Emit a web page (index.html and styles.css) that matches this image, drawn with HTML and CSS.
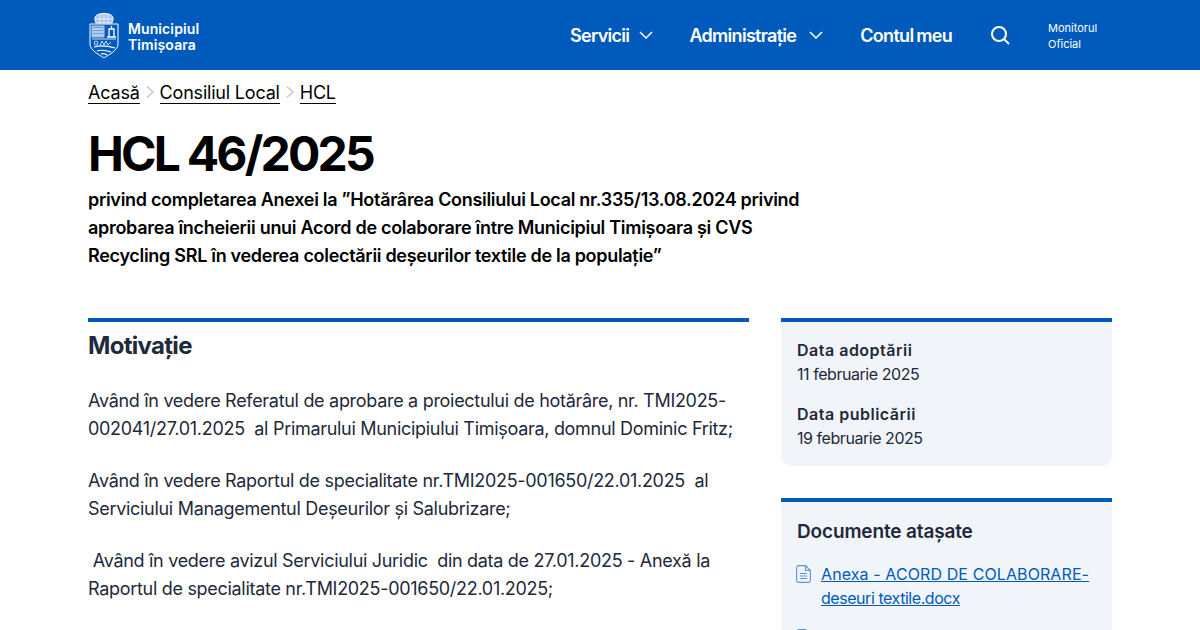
FILE: index.html
```html
<!DOCTYPE html>
<html lang="ro">
<head>
    <meta charset="UTF-8">
    <meta name="viewport" content="width=device-width, initial-scale=1.0">
    <title>HCL 46/2025</title>
    <link rel="stylesheet" href="styles.css">
</head>
<body>
    <header class="site-header">
        <div class="header-inner">
            <a class="logo" href="#">
                <svg class="logo-crest" width="30" height="46" viewBox="0 0 30 46" fill="none" stroke="#fff">
                    <path d="M7 11 C5 7 6 4 8 3 C11 1 19 1 22 3 C24 4 25 7 23 11 Z" fill="#a9c4e8" stroke-width="1"/>
                    <path d="M7 7 H23 M11 2 V11 M15 1.5 V11 M19 2 V11" stroke-width="0.7"/>
                    <path d="M1 12 H29 V32 C29 38 21 42 15 46 C9 42 1 38 1 32 Z" stroke-width="1"/>
                    <path d="M3 14 H15 V25 H3 Z" stroke-width="0.7" fill="#6f9edb"/>
                    <path d="M4 17 H14 M4 20 H14 M4 23 H14" stroke-width="1"/>
                    <path d="M20 25 V17 H25 V25 M22.5 17 V14 M18 25 H27" stroke-width="1.3"/>
                    <path d="M3 27 H27" stroke-width="0.8"/>
                    <circle cx="7" cy="31" r="1.8" stroke-width="0.8"/>
                    <path d="M11 33 L13 29 L15 33 L17 29 L19 33 L22 30" stroke-width="0.8"/>
                    <path d="M5 35 C11 33 19 34 26 36 M8 39 C13 37 18 39 22 40 M12 42 C14 41 17 42 18 43" stroke-width="1.2"/>
                </svg>
                <span class="logo-text">Municipiul<br>Timișoara</span>
            </a>
            <nav class="main-nav">
                <a class="nav-link nav-servicii" href="#">Servicii
                    <svg class="chevron" width="14" height="8" viewBox="0 0 14 8" fill="none" stroke="#fff" stroke-width="1.5"><path d="M1 1 L7 7 L13 1"/></svg>
                </a>
                <a class="nav-link nav-admin" href="#">Administrație
                    <svg class="chevron" width="14" height="8" viewBox="0 0 14 8" fill="none" stroke="#fff" stroke-width="1.5"><path d="M1 1 L7 7 L13 1"/></svg>
                </a>
                <a class="nav-link nav-cont" href="#">Contul meu</a>
                <a class="nav-search" href="#" aria-label="Caută">
                    <svg width="20" height="20" viewBox="0 0 20 20" fill="none" stroke="#fff" stroke-width="2"><circle cx="9" cy="9" r="7"/><path d="M14 14 L19 19"/></svg>
                </a>
                <a class="nav-monitor" href="#">Monitorul<br>Oficial</a>
            </nav>
        </div>
    </header>

    <main class="page">
        <div class="breadcrumbs">
            <a href="#">Acasă</a>
            <svg width="10" height="14" viewBox="0 0 10 14" fill="none" stroke="#c4c4c4" stroke-width="1.3"><path d="M2 1.5 L8 7 L2 12.5"/></svg>
            <a href="#">Consiliul Local</a>
            <svg width="10" height="14" viewBox="0 0 10 14" fill="none" stroke="#c4c4c4" stroke-width="1.3"><path d="M2 1.5 L8 7 L2 12.5"/></svg>
            <a href="#">HCL</a>
        </div>

        <h1>HCL 46/2025</h1>
        <p class="subtitle">privind completarea Anexei la ”Hotărârea Consiliului Local nr.335/13.08.2024 privind aprobarea încheierii unui Acord de colaborare între Municipiul Timișoara și CVS Recycling SRL în vederea colectării deșeurilor textile de la populație”</p>

        <div class="columns">
            <section class="content">
                <h2>Motivație</h2>
                <p>Având în vedere Referatul de aprobare a proiectului de hotărâre, nr. TMI2025-002041/27.01.2025 &nbsp;al Primarului Municipiului Timișoara, domnul Dominic Fritz;</p>
                <p>Având în vedere Raportul de specialitate nr.TMI2025-001650/22.01.2025 &nbsp;al Serviciului Managementul Deșeurilor și Salubrizare;</p>
                <p>&nbsp;Având în vedere avizul Serviciului Juridic &nbsp;din data de 27.01.2025 - Anexă la Raportul de specialitate nr.TMI2025-001650/22.01.2025;</p>
            </section>

            <aside class="sidebar">
                <div class="card card-dates">
                    <div class="date-item">
                        <strong>Data adoptării</strong>
                        <span>11 februarie 2025</span>
                    </div>
                    <div class="date-item">
                        <strong>Data publicării</strong>
                        <span>19 februarie 2025</span>
                    </div>
                </div>
                <div class="card card-docs">
                    <h3>Documente atașate</h3>
                    <div class="doc">
                        <svg width="15" height="18" viewBox="0 0 15 18" fill="none" stroke="#5b93d8" stroke-width="1.1"><path d="M2.5 .6 H9.5 L14.4 5.5 V15.5 A2 2 0 0 1 12.4 17.4 H2.5 A2 2 0 0 1 .6 15.5 V2.5 A2 2 0 0 1 2.5 .6 Z M9.5 .6 V5.5 H14.4 M4 8.5 H11 M4 11 H11 M4 13.5 H11"/></svg>
                        <a href="#"><span class="doc-head">Anexa - ACORD DE COLABORARE-</span><span class="doc-tail">deseuri textile.docx</span></a>
                    </div>
                    <div class="doc">
                        <svg width="15" height="18" viewBox="0 0 15 18" fill="none" stroke="#5b93d8" stroke-width="1.1"><path d="M2.5 .6 H9.5 L14.4 5.5 V15.5 A2 2 0 0 1 12.4 17.4 H2.5 A2 2 0 0 1 .6 15.5 V2.5 A2 2 0 0 1 2.5 .6 Z M9.5 .6 V5.5 H14.4 M4 8.5 H11 M4 11 H11 M4 13.5 H11"/></svg>
                    </div>
                </div>
            </aside>
        </div>
    </main>
</body>
</html>
```

FILE: styles.css
```css
html, body {
    height: 630px;
    overflow: hidden;
}
body {
    margin: 0;
    font-family: Inter, "Noto Sans", sans-serif;
    color: #1e293b;
    background: #fff;
}
a {
    color: inherit;
}

/* header */
.site-header {
    height: 70px;
    background-color: #005abb;
    color: #fff;
}
.header-inner {
    height: 70px;
    margin: 0 88px;
    display: flex;
    align-items: center;
    justify-content: space-between;
}
.logo {
    display: flex;
    align-items: center;
    gap: 9px;
    margin-left: 1px;
    text-decoration: none;
}
.logo-text {
    padding-top: 3px;
    font-size: 14px;
    line-height: 16px;
    font-weight: 600;
    letter-spacing: 0.1px;
}
.main-nav {
    display: flex;
    align-items: center;
}
.nav-link {
    display: flex;
    align-items: center;
    gap: 10px;
    font-size: 18px;
    font-weight: 600;
    letter-spacing: -0.7px;
    word-spacing: -1px;
    text-decoration: none;
}
.nav-servicii { margin-right: 36px; }
.nav-admin {
    gap: 13px;
    margin-right: 37px;
}
.nav-cont { margin-right: 38px; }
.nav-search {
    display: flex;
    margin-right: 38px;
}
.nav-monitor {
    width: 64px;
    padding-top: 2px;
    font-size: 11px;
    line-height: 16px;
    text-decoration: none;
}

/* breadcrumbs */
.page {
    margin: 0 88px;
}
.breadcrumbs {
    display: flex;
    align-items: center;
    gap: 5px;
    height: 44px;
    font-size: 18px;
    letter-spacing: -0.2px;
    color: #000;
}
.breadcrumbs a {
    padding-top: 2px;
    text-decoration: none;
    border-bottom: 1px solid #000;
    line-height: 20px;
}

/* title */
h1 {
    margin: 13px 0 0;
    font-size: 48px;
    line-height: 54px;
    font-weight: 700;
    letter-spacing: -2.8px;
    color: #000;
}
.subtitle {
    margin: 5px 0 0;
    width: 720px;
    font-size: 18px;
    line-height: 28px;
    font-weight: 600;
    letter-spacing: -0.3px;
    color: #000;
}

/* columns */
.columns {
    display: flex;
    justify-content: space-between;
    margin-top: 48px;
}
.content {
    width: 661px;
    border-top: 4px solid #005abb;
}
h2 {
    margin: 7px 0 0;
    font-size: 24px;
    line-height: 34px;
    font-weight: 700;
    letter-spacing: -0.7px;
}
.content p {
    margin: 24px 0 0;
    font-size: 18px;
    line-height: 28px;
    letter-spacing: -0.3px;
}

/* sidebar */
.sidebar {
    width: 331px;
}
.card {
    background: #f1f5f9;
    border-top: 4px solid #005abb;
    padding: 16px;
}
.card-dates {
    border-radius: 0 0 10px 10px;
    margin-bottom: 32px;
}
.date-item {
    font-size: 16px;
    line-height: 24px;
    letter-spacing: -0.45px;
}
.date-item strong {
    display: block;
    font-weight: 600;
    letter-spacing: 0.5px;
}
.date-item span {
    display: block;
}
.date-item + .date-item {
    margin-top: 16px;
}
h3 {
    margin: 0 0 16px;
    font-size: 19px;
    line-height: 28px;
    font-weight: 600;
    letter-spacing: -0.15px;
}
.doc {
    display: flex;
    align-items: flex-start;
    gap: 10px;
    margin-bottom: 16px;
    margin-left: -1px;
    font-size: 16px;
    line-height: 24px;
    color: #005abb;
}
.doc svg {
    flex: none;
    margin-top: 3px;
}
.doc-head {
    letter-spacing: 0.1px;
}
.doc-tail {
    letter-spacing: -0.45px;
}
```
